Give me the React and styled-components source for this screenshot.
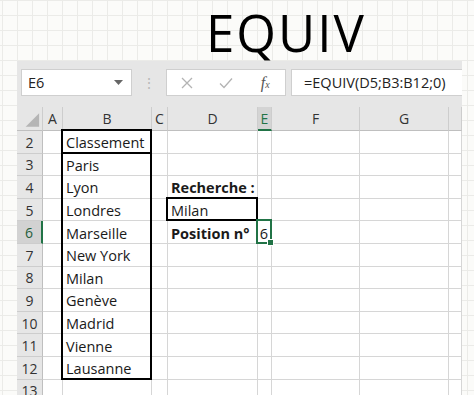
import React from "react";
import styled, { createGlobalStyle } from "styled-components";

const GlobalStyle = createGlobalStyle`
  html, body {
    margin: 0;
    padding: 0;
  }
  body {
    width: 474px;
    height: 395px;
    overflow: hidden;
    background-color: #fbfbf9;
    background-image:
      linear-gradient(#ebebe8 1px, transparent 1px),
      linear-gradient(90deg, #ebebe8 1px, transparent 1px);
    background-size: 15px 15px;
    background-position: 2px 0px;
    font-family: "Open Sans", "Noto Sans", sans-serif;
  }
`;

const Title = styled.div`
  height: 61px;
  padding: 4px 0 0 206px;
  font-family: "Open Sans", "Noto Sans", sans-serif;
  font-size: 51px;
  letter-spacing: 2px;
  line-height: 57px;
  color: #000;
  box-sizing: border-box;
`;

const Sheet = styled.div`
  margin-left: 17px;
  width: 445px;
  height: 334px;
  overflow: hidden;
  background: #e6e6e6;
`;

const Toolbar = styled.div`
  display: flex;
  align-items: center;
  height: 46px;
  padding: 0 0 3px 4px;
  box-sizing: border-box;
`;

const Field = styled.div`
  display: flex;
  align-items: center;
  height: 27px;
  box-sizing: border-box;
  background: #fff;
  border: 1px solid #cfcfcf;
  width: ${(p) => (p.w ? `${p.w}px` : "auto")};
  flex: ${(p) => (p.w ? "none" : 1)};
  padding: 0 ${(p) => p.pad || 0}px;
  font-size: 14.5px;
  color: #222;
`;

const NameText = styled.span`
  flex: 1;
`;

const Dots = styled.div`
  width: 34px;
  display: flex;
  justify-content: center;
  color: #b8b8b8;
  font-size: 14px;
`;

const IconSlot = styled.div`
  width: 40px;
  display: flex;
  justify-content: center;
  align-items: center;
`;

const Fx = styled.span`
  font-family: "Liberation Serif", "DejaVu Serif", serif;
  font-style: italic;
  font-size: 16px;
  color: #555;
  & sub {
    font-size: 10px;
    vertical-align: 0;
  }
`;

const Grid = styled.div`
  display: grid;
  grid-template-columns: 26px 20px 89px 16px 90px 14px 88px 89px 13px;
  grid-template-rows: 24px repeat(12, 22.6px);
`;

const Placed = styled.div`
  grid-column: ${(p) => p.c};
  grid-row: ${(p) => p.r};
  box-sizing: border-box;
  min-width: 0;
`;

const Head = styled(Placed)`
  display: flex;
  align-items: center;
  justify-content: center;
  background: ${(p) => (p.active ? "#d4d4d4" : "#e6e6e6")};
  border-right: 1px solid #cdcdcd;
  border-bottom: ${(p) => (p.active ? "2px solid #217346" : "1px solid #bfbfbf")};
  color: ${(p) => (p.active ? "#217346" : "#333")};
  font-size: 14px;
`;

const RowHead = styled(Placed)`
  display: flex;
  align-items: center;
  justify-content: center;
  padding-top: 1px;
  background: ${(p) => (p.active ? "#d2d2d2" : "#e6e6e6")};
  border-bottom: 1px solid #cdcdcd;
  border-right: ${(p) => (p.active ? "2px solid #217346" : "1px solid #bfbfbf")};
  color: ${(p) => (p.active ? "#1f5e3a" : "#333")};
  font-size: 14px;
`;

const Cell = styled(Placed)`
  display: flex;
  align-items: center;
  justify-content: ${(p) => (p.num ? "flex-end" : "flex-start")};
  padding: 2px 3px 0 ${(p) => (p.num ? 0 : 3)}px;
  background: #fff;
  border-right: 1px solid #d6d6d6;
  border-bottom: 1px solid #d6d6d6;
  font-size: 14.5px;
  font-weight: ${(p) => (p.bold ? 700 : 400)};
  color: #1a1a1a;
  white-space: nowrap;
`;

const Frame = styled(Placed)`
  margin: -2px 0 0 -2px;
  border: 2px solid ${(p) => p.color || "#000"};
  pointer-events: none;
  position: relative;
  z-index: 2;
`;

const Handle = styled.span`
  position: absolute;
  right: -4px;
  bottom: -4px;
  width: 5px;
  height: 5px;
  background: #217346;
  border: 1px solid #fff;
`;

const columns = ["A", "B", "C", "D", "E", "F", "G", ""];

const rows = [
  { n: 2, B: "Classement" },
  { n: 3, B: "Paris" },
  { n: 4, B: "Lyon", D: "Recherche :", Dbold: true },
  { n: 5, B: "Londres", D: "Milan" },
  { n: 6, B: "Marseille", D: "Position n°", Dbold: true, E: "6" },
  { n: 7, B: "New York" },
  { n: 8, B: "Milan" },
  { n: 9, B: "Genève" },
  { n: 10, B: "Madrid" },
  { n: 11, B: "Vienne" },
  { n: 12, B: "Lausanne" },
  { n: 13 },
];

export default function App() {
  return (
    <>
      <GlobalStyle />
      <Title>EQUIV</Title>
      <Sheet>
        <Toolbar>
          <Field w={111} pad={6}>
            <NameText>E6</NameText>
            <svg width="9" height="5" viewBox="0 0 9 5" style={{ marginRight: 2 }}>
              <polygon points="0,0 9,0 4.5,5" fill="#666" />
            </svg>
          </Field>
          <Dots>⋮</Dots>
          <Field w={120}>
            <IconSlot>
              <svg width="12" height="12" viewBox="0 0 12 12">
                <path d="M1 1 L11 11 M11 1 L1 11" stroke="#b3b3b3" strokeWidth="1.3" />
              </svg>
            </IconSlot>
            <IconSlot>
              <svg width="14" height="12" viewBox="0 0 14 12">
                <path d="M1 6.5 L5 10.5 L13 1.5" stroke="#b3b3b3" strokeWidth="1.3" fill="none" />
              </svg>
            </IconSlot>
            <IconSlot>
              <Fx>
                f<sub>x</sub>
              </Fx>
            </IconSlot>
          </Field>
          <Field pad={12} style={{ marginLeft: 5, borderRight: "none" }}>
            =EQUIV(D5;B3:B12;0)
          </Field>
        </Toolbar>
        <Grid>
          <Head r={1} c={1}>
            <svg width="26" height="23" viewBox="0 0 26 23">
              <polygon points="23,6 23,20 9,20" fill="#b5b5b5" />
            </svg>
          </Head>
          {columns.map((name, i) => (
            <Head key={i} r={1} c={i + 2} active={name === "E"}>
              {name}
            </Head>
          ))}
          {rows.map((row) => (
            <React.Fragment key={row.n}>
              <RowHead r={row.n} c={1} active={row.n === 6}>
                {row.n}
              </RowHead>
              <Cell r={row.n} c={2} />
              <Cell r={row.n} c={3}>{row.B}</Cell>
              <Cell r={row.n} c={4} />
              <Cell r={row.n} c={5} bold={row.Dbold}>{row.D}</Cell>
              <Cell r={row.n} c={6} num>{row.E}</Cell>
              <Cell r={row.n} c={7} />
              <Cell r={row.n} c={8} />
              <Cell r={row.n} c={9} />
            </React.Fragment>
          ))}
          <Frame c="3" r="2" />
          <Frame c="3" r="3 / 13" />
          <Frame c="5" r="5" />
          <Frame c="6" r="6" color="#217346">
            <Handle />
          </Frame>
        </Grid>
      </Sheet>
    </>
  );
}
